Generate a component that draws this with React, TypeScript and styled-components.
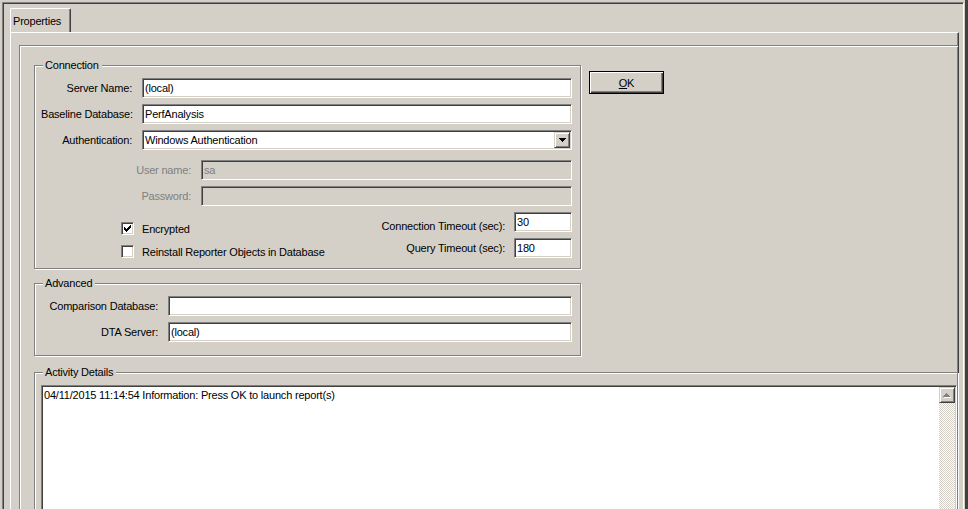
import React, { FC } from "react";
import styled, { createGlobalStyle } from "styled-components";

const colors = {
  face: "#d4d0c8",
  shadow: "#808080",
  dark: "#404040",
  light: "#ffffff",
  grayText: "#808080",
};

const GlobalStyle = createGlobalStyle`
  html, body {
    margin: 0;
    padding: 0;
    background: ${colors.face};
  }
  * {
    box-sizing: border-box;
  }
`;

const Screen = styled.div`
  width: 968px;
  height: 509px;
  overflow: hidden;
  background: ${colors.face};
  border-right: 3px solid ${colors.dark};
  padding: 2px 0 0 2px;
  font-family: "Liberation Sans", Arial, sans-serif;
  font-size: 11px;
  letter-spacing: -0.2px;
  color: #000;
`;

const Frame = styled.div`
  width: 962px;
  min-height: 540px;
  border: 1px solid;
  border-color: ${colors.shadow} ${colors.light} ${colors.light} ${colors.shadow};
  box-shadow: inset 1px 1px 0 ${colors.dark};
  padding: 5px 0 0 7px;
`;

const TabStrip = styled.div`
  display: flex;
`;

const Tab = styled.div`
  width: 61px;
  height: 24px;
  padding: 1px 0 0 2px;
  line-height: 22px;
  border-top: 1px solid ${colors.light};
  border-left: 1px solid ${colors.light};
  border-right: 1px solid ${colors.dark};
  box-shadow: inset -1px 0 0 ${colors.shadow};
  border-radius: 2px 2px 0 0;
`;

const Panel = styled.div`
  width: 949px;
  min-height: 520px;
  border-top: 1px solid ${colors.light};
  border-left: 1px solid ${colors.light};
  border-right: 1px solid ${colors.dark};
  box-shadow: inset -1px 0 0 ${colors.shadow};
  padding: 12px 0 0 8px;
`;

const Page = styled.div`
  display: grid;
  grid-template-columns: 547px 1fr;
  column-gap: 8px;
  align-items: start;
  border-top: 1px solid ${colors.shadow};
  border-left: 1px solid ${colors.shadow};
  box-shadow: inset 1px 1px 0 ${colors.light};
  padding: 19px 0 40px 14px;
`;

const GroupBox = styled.section<{ $pr?: number; $pb?: number; $mt?: number; $wide?: boolean }>`
  display: flex;
  flex-direction: column;
  gap: 6px;
  grid-column: ${(p) => (p.$wide ? "1 / -1" : "1")};
  margin-top: ${(p) => p.$mt ?? 0}px;
  border: 1px solid ${colors.shadow};
  box-shadow: inset 1px 1px 0 ${colors.light}, 1px 1px 0 ${colors.light};
  padding: 0 ${(p) => p.$pr ?? 8}px ${(p) => p.$pb ?? 10}px 6px;
`;

const GroupTitle = styled.span`
  align-self: flex-start;
  margin: -7px 0 0 2px;
  padding: 0 3px 0 2px;
  height: 13px;
  line-height: 13px;
  background: ${colors.face};
`;

const Row = styled.div<{ $label: number; $indent?: number; $mt?: number }>`
  display: grid;
  grid-template-columns: ${(p) => p.$label}px 1fr;
  column-gap: 10px;
  align-items: center;
  padding-left: ${(p) => p.$indent ?? 0}px;
  margin-top: ${(p) => p.$mt ?? 0}px;
`;

const Label = styled.span<{ $disabled?: boolean; $drop?: number }>`
  text-align: right;
  white-space: nowrap;
  padding-top: ${(p) => p.$drop ?? 0}px;
  color: ${(p) => (p.$disabled ? colors.grayText : "#000")};
`;

const Field = styled.div<{ $disabled?: boolean }>`
  display: flex;
  align-items: center;
  justify-content: space-between;
  height: 20px;
  padding: 0 1px 0 1px;
  line-height: 18px;
  white-space: nowrap;
  overflow: hidden;
  border: 1px solid;
  border-color: ${colors.shadow} ${colors.light} ${colors.light} ${colors.shadow};
  box-shadow: inset 1px 1px 0 ${colors.dark}, inset -1px -1px 0 ${colors.face};
  background: ${(p) => (p.$disabled ? colors.face : colors.light)};
  color: ${(p) => (p.$disabled ? colors.grayText : "#000")};
`;

const FieldText = styled.span`
  padding-left: 1px;
`;

const DropButton = styled.span`
  display: flex;
  align-items: center;
  justify-content: center;
  width: 16px;
  height: 16px;
  background: ${colors.face};
  border: 1px solid;
  border-color: ${colors.face} ${colors.dark} ${colors.dark} ${colors.face};
  box-shadow: inset 1px 1px 0 ${colors.light}, inset -1px -1px 0 ${colors.shadow};
`;

const OptionsRow = styled.div`
  display: flex;
  justify-content: space-between;
  align-items: flex-start;
`;

const Checks = styled.div`
  display: flex;
  flex-direction: column;
  gap: 10px;
  padding: 10px 0 0 80px;
`;

const CheckRow = styled.div`
  display: flex;
  align-items: center;
  gap: 8px;
  height: 13px;
  white-space: nowrap;
`;

const CheckBox = styled.span`
  display: flex;
  align-items: center;
  justify-content: center;
  width: 13px;
  height: 13px;
  border: 1px solid;
  border-color: ${colors.shadow} ${colors.light} ${colors.light} ${colors.shadow};
  box-shadow: inset 1px 1px 0 ${colors.dark}, inset -1px -1px 0 ${colors.face};
  background: ${colors.light};
`;

const Timeouts = styled.div`
  display: grid;
  grid-template-columns: auto 58px;
  column-gap: 9px;
  row-gap: 6px;
  align-items: center;
`;

const OkButton = styled.button`
  grid-column: 2;
  grid-row: 1;
  justify-self: start;
  margin-top: 6px;
  width: 75px;
  height: 23px;
  padding: 0;
  font: inherit;
  letter-spacing: inherit;
  color: #000;
  background: ${colors.face};
  border: 1px solid #000;
  box-shadow: inset 1px 1px 0 ${colors.light}, inset -1px -1px 0 ${colors.dark},
    inset -2px -2px 0 ${colors.shadow};
`;

const Log = styled.div`
  display: flex;
  height: 160px;
  padding: 1px;
  border: 1px solid;
  border-color: ${colors.shadow} ${colors.light} ${colors.light} ${colors.shadow};
  box-shadow: inset 1px 1px 0 ${colors.dark}, inset -1px -1px 0 ${colors.face};
  background: ${colors.light};
`;

const LogText = styled.div`
  flex: 1;
  padding: 2px 1px;
  line-height: 13px;
  white-space: nowrap;
`;

const ScrollTrack = styled.div`
  width: 16px;
  display: flex;
  flex-direction: column;
  background-color: ${colors.face};
  background-image: conic-gradient(
    ${colors.light} 25%,
    ${colors.face} 0 50%,
    ${colors.light} 0 75%,
    ${colors.face} 0
  );
  background-size: 2px 2px;
`;

const ScrollButton = styled.div`
  display: flex;
  align-items: center;
  justify-content: center;
  height: 16px;
  background: ${colors.face};
  border: 1px solid;
  border-color: ${colors.face} ${colors.dark} ${colors.dark} ${colors.face};
  box-shadow: inset 1px 1px 0 ${colors.light}, inset -1px -1px 0 ${colors.shadow};
`;

const DownArrow: FC = () => (
  <svg width="7" height="4" viewBox="0 0 7 4" shapeRendering="crispEdges">
    <path d="M0 0h7v1H6v1H5v1H4v1H3V3H2V2H1V1H0z" fill="#000" />
  </svg>
);

const UpArrowDisabled: FC = () => (
  <svg width="8" height="5" viewBox="0 0 8 5" shapeRendering="crispEdges">
    <path d="M4 1h1v1h1v1h1v1h1v1H1V4h1V3h1V2h1z" fill={colors.light} />
    <path d="M3 0h1v1h1v1h1v1h1v1H0V3h1V2h1V1h1z" fill={colors.shadow} />
  </svg>
);

const CheckMark: FC = () => (
  <svg width="7" height="7" viewBox="0 0 7 7" shapeRendering="crispEdges">
    <path
      d="M6 0h1v3H6v1H5v1H4v1H3v1H2V6H1V5H0V2h1v1h1v1h1V3h1V2h1V1h1z"
      fill="#000"
    />
  </svg>
);

const App: FC = () => {
  return (
    <>
      <GlobalStyle />
      <Screen>
        <Frame>
          <TabStrip>
            <Tab>Properties</Tab>
          </TabStrip>
          <Panel>
            <Page>
              <GroupBox>
                <GroupTitle>Connection</GroupTitle>
                <Row $label={91}>
                  <Label>Server Name:</Label>
                  <Field>
                    <FieldText>(local)</FieldText>
                  </Field>
                </Row>
                <Row $label={91}>
                  <Label>Baseline Database:</Label>
                  <Field>
                    <FieldText>PerfAnalysis</FieldText>
                  </Field>
                </Row>
                <Row $label={91}>
                  <Label>Authentication:</Label>
                  <Field>
                    <FieldText>Windows Authentication</FieldText>
                    <DropButton>
                      <DownArrow />
                    </DropButton>
                  </Field>
                </Row>
                <Row $label={91} $indent={59} $mt={4}>
                  <Label $disabled>User name:</Label>
                  <Field $disabled>
                    <FieldText>sa</FieldText>
                  </Field>
                </Row>
                <Row $label={91} $indent={59}>
                  <Label $disabled>Password:</Label>
                  <Field $disabled />
                </Row>
                <OptionsRow>
                  <Checks>
                    <CheckRow>
                      <CheckBox>
                        <CheckMark />
                      </CheckBox>
                      Encrypted
                    </CheckRow>
                    <CheckRow>
                      <CheckBox />
                      Reinstall Reporter Objects in Database
                    </CheckRow>
                  </Checks>
                  <Timeouts>
                    <Label $drop={8}>Connection Timeout (sec):</Label>
                    <Field>
                      <FieldText>30</FieldText>
                    </Field>
                    <Label>Query Timeout (sec):</Label>
                    <Field>
                      <FieldText>180</FieldText>
                    </Field>
                  </Timeouts>
                </OptionsRow>
              </GroupBox>

              <OkButton>
                <u>O</u>K
              </OkButton>

              <GroupBox $mt={14} $pb={13}>
                <GroupTitle>Advanced</GroupTitle>
                <Row $label={117}>
                  <Label>Comparison Database:</Label>
                  <Field />
                </Row>
                <Row $label={117}>
                  <Label>DTA Server:</Label>
                  <Field>
                    <FieldText>(local)</FieldText>
                  </Field>
                </Row>
              </GroupBox>

              <GroupBox $wide $mt={16} $pr={0} $pb={0}>
                <GroupTitle>Activity Details</GroupTitle>
                <Log>
                  <LogText>
                    04/11/2015 11:14:54 Information: Press OK to launch report(s)
                  </LogText>
                  <ScrollTrack>
                    <ScrollButton>
                      <UpArrowDisabled />
                    </ScrollButton>
                  </ScrollTrack>
                </Log>
              </GroupBox>
            </Page>
          </Panel>
        </Frame>
      </Screen>
    </>
  );
};

export default App;
